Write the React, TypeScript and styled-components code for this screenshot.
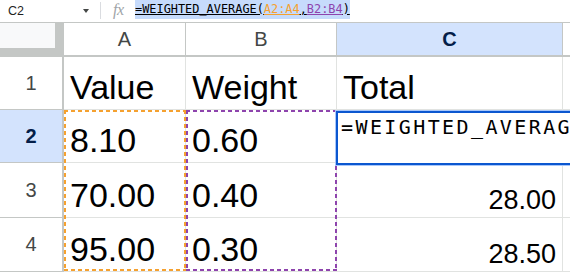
import React from 'react';
import styled, { createGlobalStyle } from 'styled-components';

const GlobalStyle = createGlobalStyle`
  * { box-sizing: border-box; }
  html, body { margin: 0; padding: 0; background: #fff; overflow: hidden; }
  body { font-family: "Liberation Sans", Arial, sans-serif; }
`;

const Page = styled.div`
  width: 570px;
  height: 273px;
  overflow: hidden;
  display: flex;
  flex-direction: column;
`;

const FormulaBar = styled.div`
  display: flex;
  align-items: flex-start;
  height: 23px;
  flex: none;
  border-bottom: 1px solid #c4c7c5;
`;

const NameBox = styled.div`
  width: 100px;
  height: 22px;
  display: flex;
  align-items: center;
  justify-content: space-between;
  padding: 0 11px 0 8px;
  font-size: 12.5px;
  color: #1f1f1f;
`;

const Caret = styled.span`
  width: 0;
  height: 0;
  border-left: 3.5px solid transparent;
  border-right: 3.5px solid transparent;
  border-top: 4px solid #444746;
`;

const Divider = styled.div`
  width: 1px;
  height: 17px;
  margin-top: 2px;
  background: #dadce0;
`;

const Fx = styled.div`
  width: 34px;
  padding-left: 12px;
  font-family: "Liberation Serif", serif;
  font-style: italic;
  font-size: 16px;
  line-height: 20px;
  letter-spacing: -0.5px;
  color: #a0a4a8;
`;

const Formula = styled.div`
  font-family: "DejaVu Sans Mono", monospace;
  font-size: 11.9px;
  line-height: 19px;
  white-space: pre;
  background: #c6dbfc;
  color: #000;
  text-decoration: underline;
`;

const Ref = styled.span<{ $color: string }>`
  color: ${p => p.$color};
  text-decoration: underline;
  text-decoration-color: ${p => p.$color};
`;

const Sheet = styled.div`
  display: grid;
  grid-template-columns: 64px 122px 151px 226px 1fr;
  grid-template-rows: 34px 53px 53px 55px 54px;
`;

const Corner = styled.div`
  grid-row: 1;
  grid-column: 1;
  background: #f8f9fa;
  border-right: 9px solid #c4c7c5;
  border-bottom: 9px solid #c4c7c5;
`;

const ColHeader = styled.div<{ $col: number; $active?: boolean }>`
  grid-row: 1;
  grid-column: ${p => p.$col};
  display: flex;
  align-items: center;
  justify-content: center;
  border-right: 1px solid #c4c7c5;
  border-bottom: 2px solid #c4c7c5;
  font-size: 20px;
  background: ${p => (p.$active ? '#d3e3fd' : '#fff')};
  color: ${p => (p.$active ? '#041e49' : '#444746')};
  font-weight: ${p => (p.$active ? 700 : 400)};
`;

const RowHeader = styled.div<{ $row: number; $active?: boolean }>`
  grid-row: ${p => p.$row};
  grid-column: 1;
  display: flex;
  align-items: center;
  justify-content: center;
  border-right: 2px solid #c4c7c5;
  border-bottom: 1px solid #c4c7c5;
  font-size: 20px;
  background: ${p => (p.$active ? '#d3e3fd' : '#fff')};
  color: ${p => (p.$active ? '#041e49' : '#444746')};
  font-weight: ${p => (p.$active ? 700 : 400)};
`;

const Cell = styled.div<{ $row: number; $col: number; $right?: boolean; $small?: boolean }>`
  grid-row: ${p => p.$row};
  grid-column: ${p => p.$col};
  display: flex;
  align-items: flex-end;
  justify-content: ${p => (p.$right ? 'flex-end' : 'flex-start')};
  padding: 0 6px ${p => (p.$small ? '3px' : '5px')} 6px;
  border-right: 1px solid #e1e3e1;
  border-bottom: 1px solid #e1e3e1;
  font-size: ${p => (p.$small ? '27px' : '34px')};
  line-height: 1;
  color: #000;
  white-space: nowrap;
  overflow: hidden;
`;

const dashes = (c: string) => `
  repeating-linear-gradient(90deg, ${c} 0 4px, transparent 4px 7px) top left / 100% 2px no-repeat,
  repeating-linear-gradient(90deg, ${c} 0 4px, transparent 4px 7px) bottom left / 100% 2px no-repeat,
  repeating-linear-gradient(180deg, ${c} 0 4px, transparent 4px 7px) top left / 2px 100% no-repeat,
  repeating-linear-gradient(180deg, ${c} 0 4px, transparent 4px 7px) top right / 2px 100% no-repeat
`;

const RangeBox = styled.div<{ $col: number; $color: string }>`
  grid-row: 3 / 6;
  grid-column: ${p => p.$col};
  margin-bottom: 1px;
  background: ${p => dashes(p.$color)};
  pointer-events: none;
  z-index: 1;
`;

// the in-cell editor runs on past the window's right edge
const Editor = styled.div`
  grid-row: 3;
  grid-column: 4 / 6;
  margin: 1px -60px -2px -1px;
  border: 2px solid #0b57d0;
  box-shadow: 0 0 0 1px #a8c7fa;
  background: #fff;
  padding: 2px 3px;
  font-family: "DejaVu Sans Mono", monospace;
  font-size: 20px;
  letter-spacing: 2.4px;
  color: #000;
  white-space: nowrap;
  overflow: hidden;
  z-index: 2;
`;

const ORANGE = '#f5a130';
const PURPLE = '#8e44ad';

const rows = [
  ['Value', 'Weight', 'Total'],
  ['8.10', '0.60', ''],
  ['70.00', '0.40', '28.00'],
  ['95.00', '0.30', '28.50'],
];

const App = () => {
  return (
    <Page>
      <GlobalStyle />
      <FormulaBar>
        <NameBox>
          C2
          <Caret />
        </NameBox>
        <Divider />
        <Fx>fx</Fx>
        <Formula>
          =WEIGHTED_AVERAGE(<Ref $color={ORANGE}>A2:A4</Ref>,<Ref $color={PURPLE}>B2:B4</Ref>)
        </Formula>
      </FormulaBar>
      <Sheet>
        <Corner />
        <ColHeader $col={2}>A</ColHeader>
        <ColHeader $col={3}>B</ColHeader>
        <ColHeader $col={4} $active>C</ColHeader>
        <ColHeader $col={5} />
        {rows.map((cells, i) => {
          const r = i + 2;
          const numeric = i >= 2;
          return (
            <React.Fragment key={r}>
              <RowHeader $row={r} $active={i === 1}>{i + 1}</RowHeader>
              <Cell $row={r} $col={2}>{cells[0]}</Cell>
              <Cell $row={r} $col={3}>{cells[1]}</Cell>
              <Cell $row={r} $col={4} $right={numeric} $small={numeric}>{cells[2]}</Cell>
              <Cell $row={r} $col={5} />
            </React.Fragment>
          );
        })}
        <RangeBox $col={2} $color={ORANGE} />
        <RangeBox $col={3} $color={PURPLE} />
        <Editor>=WEIGHTED_AVERAGE(A2:A4,B2:B4)</Editor>
      </Sheet>
    </Page>
  );
};

export default App;
